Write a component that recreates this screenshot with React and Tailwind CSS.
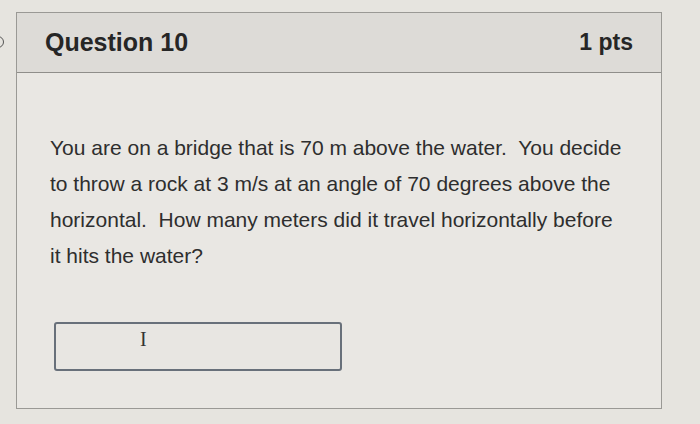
import React from 'react';

const App = () => {
    return (
        <div className="relative w-[700px] h-[424px] overflow-hidden bg-[#e6e4df] pt-[12px] pl-[16px]" style={{ fontFamily: '"Liberation Sans", Arial, sans-serif' }}>
            {/* edge of previous nav arrow */}
            <div className="absolute left-[-8px] top-[36px] w-[12px] h-[12px] rounded-full border-[1.5px] border-[#555]" />

            <div className="w-[646px] h-[397px] border border-[#9a9995] bg-[#e9e7e3] flex flex-col">
                {/* Header */}
                <div className="h-[60px] bg-[#dddbd7] border-b border-[#8f8e8a] flex items-center justify-between pl-[28px] pr-[28px] text-[#262626]">
                    <span className="text-[25px] font-bold">Question 10</span>
                    <span className="text-[23px] font-bold">1 pts</span>
                </div>

                {/* Body */}
                <div className="pl-[33px] pr-[20px] pt-[57px] text-[21px] leading-[36px] text-[#2e2e2e]">
                    <p className="whitespace-nowrap">
                        You are on a bridge that is 70 m above the water.&nbsp; You decide<br />
                        to throw a rock at 3 m/s at an angle of 70 degrees above the<br />
                        horizontal.&nbsp; How many meters did it travel horizontally before<br />
                        it hits the water?
                    </p>
                    <div className="mt-[48px] ml-[4px] relative w-[288px] h-[49px] rounded-[3px] border-[2px] border-[#68707a] bg-[#e8e6e2]">
                        <span className="absolute left-[84px] top-[5px] text-[20px] leading-[20px] text-[#333]" style={{ fontFamily: '"Liberation Serif", serif' }}>I</span>
                    </div>
                </div>
            </div>
        </div>
    );
};

export default App;
